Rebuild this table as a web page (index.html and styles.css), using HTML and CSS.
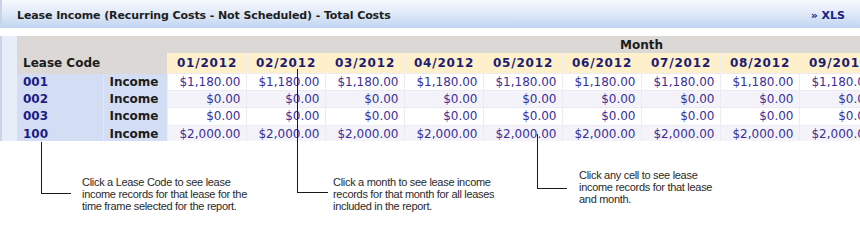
FILE: index.html
```html
<!DOCTYPE html>
<html>
<head>
<meta charset="utf-8">
<link rel="stylesheet" href="styles.css">
</head>
<body>
<div class="report">
  <div class="panel-head">
    <span class="title">Lease Income (Recurring Costs - Not Scheduled) - Total Costs</span>
    <a class="xls">» XLS</a>
  </div>
  <div class="panel-body">
    <div class="table-wrap">
      <table class="grid">
        <colgroup>
          <col class="c-code"><col class="c-type">
          <col class="c-m"><col class="c-m"><col class="c-m"><col class="c-m"><col class="c-m"><col class="c-m">
          <col class="c-m"><col class="c-m"><col class="c-m"><col class="c-m"><col class="c-m"><col class="c-m">
        </colgroup>
        <tr class="r-month">
          <td class="h-gray" colspan="2"></td>
          <td class="h-gray h-month" colspan="12">Month</td>
        </tr>
        <tr class="r-head">
          <td class="h-gray h-code" colspan="2">Lease Code</td>
          <td class="h-date">01/2012</td><td class="h-date">02/2012</td><td class="h-date">03/2012</td>
          <td class="h-date">04/2012</td><td class="h-date">05/2012</td><td class="h-date">06/2012</td>
          <td class="h-date">07/2012</td><td class="h-date">08/2012</td><td class="h-date">09/2012</td>
          <td class="h-date">10/2012</td><td class="h-date">11/2012</td><td class="h-date">12/2012</td>
        </tr>
        <tr class="r1">
          <td class="code">001</td><td class="type">Income</td>
          <td class="v">$1,180.00</td><td class="v">$1,180.00</td><td class="v">$1,180.00</td><td class="v">$1,180.00</td>
          <td class="v">$1,180.00</td><td class="v">$1,180.00</td><td class="v">$1,180.00</td><td class="v">$1,180.00</td>
          <td class="v">$1,180.00</td><td class="v">$1,180.00</td><td class="v">$1,180.00</td><td class="v">$1,180.00</td>
        </tr>
        <tr class="r2 alt">
          <td class="code">002</td><td class="type">Income</td>
          <td class="v">$0.00</td><td class="v">$0.00</td><td class="v">$0.00</td><td class="v">$0.00</td>
          <td class="v">$0.00</td><td class="v">$0.00</td><td class="v">$0.00</td><td class="v">$0.00</td>
          <td class="v">$0.00</td><td class="v">$0.00</td><td class="v">$0.00</td><td class="v">$0.00</td>
        </tr>
        <tr class="r3">
          <td class="code">003</td><td class="type">Income</td>
          <td class="v">$0.00</td><td class="v">$0.00</td><td class="v">$0.00</td><td class="v">$0.00</td>
          <td class="v">$0.00</td><td class="v">$0.00</td><td class="v">$0.00</td><td class="v">$0.00</td>
          <td class="v">$0.00</td><td class="v">$0.00</td><td class="v">$0.00</td><td class="v">$0.00</td>
        </tr>
        <tr class="r4 alt">
          <td class="code">100</td><td class="type">Income</td>
          <td class="v">$2,000.00</td><td class="v">$2,000.00</td><td class="v">$2,000.00</td><td class="v">$2,000.00</td>
          <td class="v">$2,000.00</td><td class="v">$2,000.00</td><td class="v">$2,000.00</td><td class="v">$2,000.00</td>
          <td class="v">$2,000.00</td><td class="v">$2,000.00</td><td class="v">$2,000.00</td><td class="v">$2,000.00</td>
        </tr>
      </table>
    </div>
  </div>

  <div class="callout callout-code">
    <span class="leader leader-code"></span>
    <p class="note note-code">Click a Lease Code to see lease<br>income records for that lease for the<br>time frame selected for the report.</p>
  </div>
  <div class="callout callout-month">
    <span class="leader leader-month"></span>
    <p class="note note-month">Click a month to see lease income<br>records for that month for all leases<br>included in the report.</p>
  </div>
  <div class="callout callout-cell">
    <span class="leader leader-cell"></span>
    <p class="note note-cell">Click any cell to see lease<br>income records for that lease<br>and month.</p>
  </div>
</div>
</body>
</html>
```

FILE: styles.css
```css
html, body {
  margin: 0;
  padding: 0;
  background: #ffffff;
  overflow: hidden;
}

.report {
  position: relative;
  width: 860px;
  height: 242px;
  overflow: hidden;
  font-family: "DejaVu Sans", Verdana, sans-serif;
}

.panel-head {
  height: 28px;
  display: flex;
  align-items: center;
  justify-content: space-between;
  padding: 0 15px 0 15px;
  background: linear-gradient(to bottom, #f6f9fe 0%, #e2ebf9 45%, #c0d4f0 100%);
  border-left: 2px solid #c9d5e6;
  box-sizing: border-box;
}

.title {
  font-weight: bold;
  font-size: 11px;
  letter-spacing: -0.1px;
  color: #1e1e1e;
  padding-top: 2px;
}

.xls {
  font-weight: bold;
  font-size: 11px;
  color: #1a2284;
  padding-top: 2px;
}

.panel-body {
  margin-top: 8px;
  background: #e8eef9;
  border-left: 2px solid #c9d5e6;
  padding-left: 15px;
  height: 105px;
  overflow: hidden;
}

.table-wrap {
  width: 843px;
  overflow: hidden;
}

.grid {
  border-collapse: collapse;
  table-layout: fixed;
  width: 1098px;
  font-size: 12px;
}

.c-code { width: 86px; }
.c-type { width: 64px; }
.c-m { width: 79px; }

.grid td {
  padding: 0 5px 0 6px;
  white-space: nowrap;
  overflow: hidden;
  line-height: 14px;
}

.r-month td { height: 17px; }
.r-head td { height: 20px; }
.r1 td { height: 16.2px; }
.r2 td, .r3 td, .r4 td { height: 16.2px; }

.h-gray {
  background: #dbd8d6;
  font-weight: bold;
  color: #1c1c1c;
}

.h-month {
  text-align: center;
}

.h-code {
  text-align: left;
}

.h-date {
  background: #fdf0cb;
  color: #1c1c70;
  font-weight: bold;
  text-align: center;
  letter-spacing: 0.8px;
  border-left: 1px solid #f3f1ee;
}

.code {
  background: #d3def5;
  color: #1c1c86;
  font-weight: bold;
}

.type {
  background: #d3def5;
  color: #1c1c1c;
  font-weight: bold;
  border-left: 1px solid #dfe6f6;
}

.v {
  background: #ffffff;
  color: #3a2f98;
  text-align: right;
  border: 1px solid #ecebf4;
}

.alt .v {
  background: #f3f3f9;
}

/* callouts: annotation overlays */
.callout {
  position: absolute;
  left: 0;
  top: 0;
}

.leader {
  position: absolute;
  border-left: 1px solid #1a1a1a;
  border-bottom: 1px solid #1a1a1a;
}

.leader-code {
  left: 41px;
  top: 142px;
  width: 29px;
  height: 51px;
}

.leader-month {
  left: 297px;
  top: 69px;
  width: 30px;
  height: 123px;
}

.leader-cell {
  left: 537px;
  top: 134px;
  width: 29px;
  height: 54px;
}

.note {
  position: absolute;
  margin: 0;
  font-family: "Liberation Sans", Arial, sans-serif;
  font-size: 11px;
  line-height: 12px;
  color: #2a2a2a;
  letter-spacing: -0.3px;
  white-space: nowrap;
}

.note-code {
  left: 82px;
  top: 176px;
}

.note-month {
  left: 333px;
  top: 176px;
}

.note-cell {
  left: 579px;
  top: 169px;
}
```
